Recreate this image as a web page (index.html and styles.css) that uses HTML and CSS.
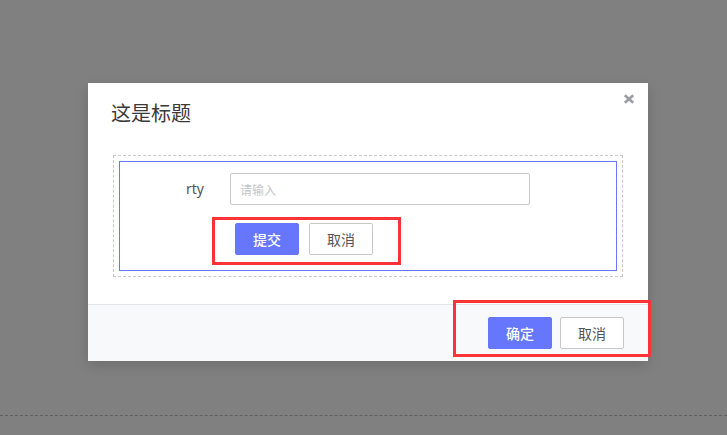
FILE: index.html
```html
<!DOCTYPE html>
<html lang="zh">
<head>
<meta charset="utf-8">
<title>Modal</title>
<link rel="stylesheet" href="styles.css">
</head>
<body>
<div class="page"></div>
<div class="mask">
  <div class="modal">
    <button class="close" aria-label="关闭">
      <svg width="12" height="10" viewBox="0 0 12 10"><path d="M1.8 1.2 L10.2 8.8 M10.2 1.2 L1.8 8.8" stroke="#9a9da5" stroke-width="2.6" stroke-linecap="butt" fill="none"/></svg>
    </button>
    <div class="modal-header">这是标题</div>
    <div class="modal-body">
      <div class="dashed">
        <form class="form">
          <div class="form-row">
            <label class="form-label">rty</label>
            <input class="input" type="text" placeholder="请输入">
          </div>
          <div class="form-actions">
            <button type="button" class="btn btn-primary">提交</button>
            <button type="button" class="btn btn-default">取消</button>
          </div>
        </form>
      </div>
    </div>
    <div class="modal-footer">
      <button class="btn btn-primary">确定</button>
      <button class="btn btn-default">取消</button>
    </div>
  </div>
</div>
<div class="mark mark-form"></div>
<div class="mark mark-footer"></div>
</body>
</html>
```

FILE: styles.css
```css
html, body {
  margin: 0;
  padding: 0;
}
body {
  width: 727px;
  height: 435px;
  background: #808080;
  font-family: "Noto Sans", "Noto Sans CJK SC", sans-serif;
  overflow: hidden;
  position: relative;
}
.page {
  height: 415px;
  border-bottom: 1px dashed #5f5f5f;
}
.mask {
  position: absolute;
  left: 0;
  top: 0;
  right: 0;
  bottom: 0;
}
.modal {
  position: absolute;
  left: 88px;
  top: 83px;
  width: 560px;
  background: #fff;
  box-shadow: 0 4px 12px rgba(0, 0, 0, 0.15);
}
.close {
  position: absolute;
  right: 13px;
  top: 11px;
  width: 12px;
  height: 10px;
  padding: 0;
  border: 0;
  background: none;
  display: flex;
}
.modal-header {
  padding: 16px 23px 28px;
  font-family: "Noto Sans CJK SC", sans-serif;
  font-size: 20px;
  line-height: 28px;
  color: #3a3a3a;
}
.modal-body {
  padding: 0 25px 27px;
}
.dashed {
  border: 1px dashed #c8c8c8;
  padding: 5px;
}
.form {
  border: 1px solid #6677fd;
  padding: 11px 0 15px;
  margin: 0;
}
.form-row {
  display: flex;
  align-items: center;
}
.form-label {
  width: 110px;
  padding-right: 26px;
  box-sizing: border-box;
  text-align: right;
  font-size: 14px;
  line-height: 32px;
  color: #555;
}
.input {
  width: 300px;
  height: 32px;
  box-sizing: border-box;
  border: 1px solid #c9c9c9;
  border-radius: 2px;
  padding: 0 9px;
  font-family: "Noto Sans CJK SC", sans-serif;
  font-size: 12px;
  outline: none;
}
.input::placeholder {
  color: #c3c5cb;
}
.form-actions {
  display: flex;
  gap: 10px;
  margin: 18px 0 0 115px;
}
.btn {
  width: 64px;
  height: 32px;
  box-sizing: border-box;
  border-radius: 2px;
  font-family: "Noto Sans CJK SC", sans-serif;
  font-size: 14px;
  padding: 0;
  cursor: pointer;
}
.btn-primary {
  background: #6677fd;
  border: 1px solid #6677fd;
  color: #fff;
  font-weight: 500;
}
.btn-default {
  background: #fff;
  border: 1px solid #c8c8c8;
  color: #555;
}
.modal-footer {
  display: flex;
  justify-content: flex-end;
  gap: 8px;
  padding: 12px 24px;
  background: #f8f9fb;
  border-top: 1px solid #e3e4ea;
}
.mark {
  position: absolute;
  border: 3px solid #fa3338;
}
.mark-form {
  left: 212px;
  top: 217px;
  width: 183px;
  height: 42px;
}
.mark-footer {
  left: 453px;
  top: 300px;
  width: 192px;
  height: 51px;
}
```
